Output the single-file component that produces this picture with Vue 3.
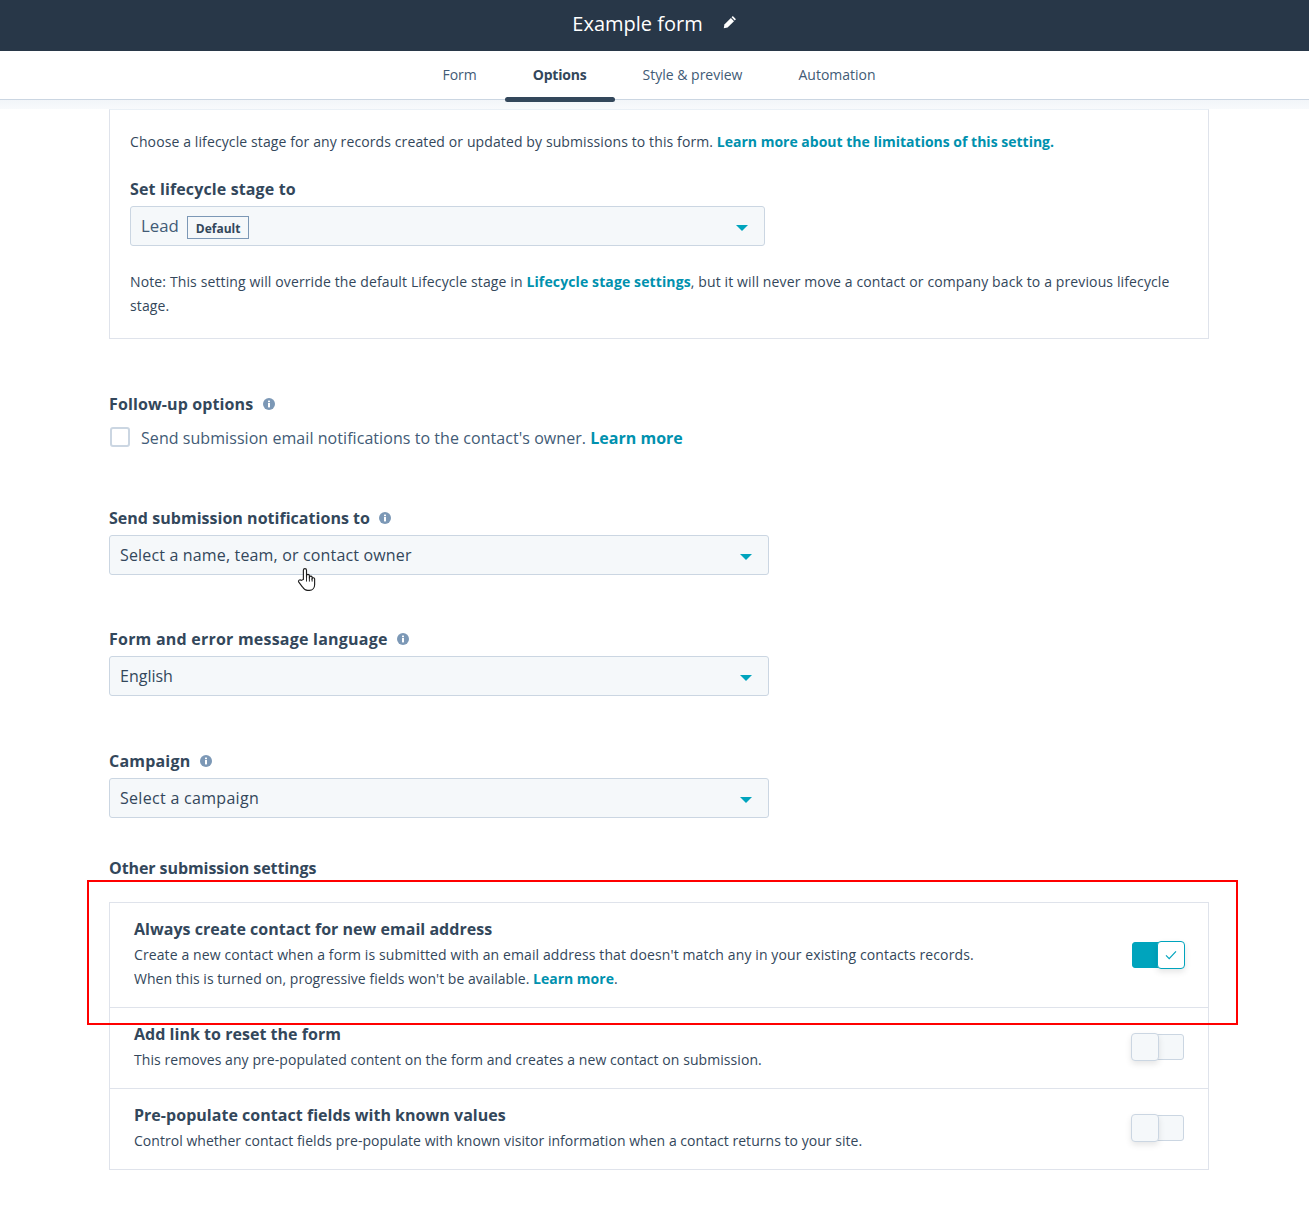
<template>
  <div class="page">
    <header class="title-bar">
      <span class="title">Example form</span>
      <svg class="pencil" viewBox="0 0 16 16" width="14" height="14">
        <path d="M11.2 1.2 14.8 4.8 13.4 6.2 9.8 2.600Z" fill="#fff" />
        <path d="M9 3.400 12.600 7 5.200 14.400 0.900 15.100 1.600 10.800Z" fill="#fff" />
      </svg>
    </header>
    <nav class="tabs">
      <a v-for="tab in tabs" :key="tab" class="tab" :class="{ active: tab === 'Options' }">{{ tab }}</a>
    </nav>
    <div class="tabs-shadow"></div>

    <main class="content">
      <section class="card">
        <p class="intro">
          Choose a lifecycle stage for any records created or updated by submissions to this form.
          <a class="link">Learn more about the limitations of this setting.</a>
        </p>
        <h3 class="label stage-label">Set lifecycle stage to</h3>
        <div class="select stage-select">
          <span class="lead">Lead</span>
          <span class="tag">Default</span>
          <span class="caret"></span>
        </div>
        <p class="note">
          Note: This setting will override the default Lifecycle stage in
          <a class="link">Lifecycle stage settings</a>, but it will never move a contact or company back to a previous lifecycle stage.
        </p>
      </section>

      <section class="followup">
        <h3 class="label follow-label">
          Follow-up options
          <svg class="info" viewBox="0 0 12 12" width="12" height="12">
            <circle cx="6" cy="6" r="6" fill="#7c98b6" />
            <rect x="5" y="5" width="2" height="4.400" fill="#fff" />
            <rect x="5" y="2.600" width="2" height="1.600" fill="#fff" />
          </svg>
        </h3>
        <div class="check-row">
          <span class="checkbox"></span>
          <span class="check-text">Send submission email notifications to the contact's owner. <a class="link">Learn more</a></span>
        </div>
      </section>

      <section v-for="f in fields" :key="f.label" class="field" :style="{ marginTop: f.gap + 'px' }">
        <h3 class="label" :style="{ letterSpacing: f.spacing + 'px' }">
          {{ f.label }}
          <svg class="info" viewBox="0 0 12 12" width="12" height="12">
            <circle cx="6" cy="6" r="6" fill="#7c98b6" />
            <rect x="5" y="5" width="2" height="4.400" fill="#fff" />
            <rect x="5" y="2.600" width="2" height="1.600" fill="#fff" />
          </svg>
        </h3>
        <div class="select wide">
          <span :style="{ letterSpacing: f.valueSpacing + 'px' }">{{ f.value }}</span>
          <span class="caret"></span>
        </div>
      </section>

      <h3 class="label other">Other submission settings</h3>
      <section class="settings">
        <div v-for="s in settings" :key="s.title" class="setting" :class="{ first: s.on }">
          <div class="setting-text">
            <h4>{{ s.title }}</h4>
            <p :style="{ letterSpacing: s.spacing + 'px' }">{{ s.text }}</p>
            <p v-if="s.on" class="extra">When this is turned on, progressive fields won't be available. <a class="link">Learn more</a>.</p>
          </div>
          <div class="toggle" :class="{ on: s.on }">
            <span class="knob">
              <svg v-if="s.on" viewBox="0 0 12 10" width="12" height="10">
                <path d="M1 5.400 4.200 8.600 11 1.400" fill="none" stroke="#00a4bd" stroke-width="1.200" />
              </svg>
            </span>
          </div>
        </div>
      </section>
    </main>

    <div class="highlight"></div>
    <svg class="cursor" viewBox="0 0 18 24" width="19" height="25">
      <path d="M6 12V3a1.500 1.500 0 0 1 3 0v7-1.500a1.400 1.400 0 0 1 2.800 0V11 9.600a1.400 1.400 0 0 1 2.600 0V11a1.300 1.300 0 0 1 2.400.4V17c0 3-2 5.500-5 5.500H10c-2.500 0-3.500-1.200-5-3.500L1.600 14.500c-1-1.500 1-3 2.400-1.600Z" fill="#fff" stroke="#1c1c1c" stroke-width="1.100" />
      <path d="M9 9v5M11.800 10v4M14.400 11v3" stroke="#1c1c1c" stroke-width="0.900" fill="none" />
    </svg>
  </div>
</template>

<script setup>
const tabs = ['Form', 'Options', 'Style & preview', 'Automation']

const fields = [
  { label: 'Send submission notifications to', value: 'Select a name, team, or contact owner', gap: 59, spacing: 0.03, valueSpacing: 0.16 },
  { label: 'Form and error message language', value: 'English', gap: 54, spacing: 0.22, valueSpacing: 0 },
  { label: 'Campaign', value: 'Select a campaign', gap: 55, spacing: 0.2, valueSpacing: 0.3 }
]

const settings = [
  {
    title: 'Always create contact for new email address',
    text: "Create a new contact when a form is submitted with an email address that doesn't match any in your existing contacts records.",
    on: true,
    spacing: 0.11
  },
  {
    title: 'Add link to reset the form',
    text: 'This removes any pre-populated content on the form and creates a new contact on submission.',
    on: false,
    spacing: 0.065
  },
  {
    title: 'Pre-populate contact fields with known values',
    text: 'Control whether contact fields pre-populate with known visitor information when a contact returns to your site.',
    on: false,
    spacing: 0.035
  }
]
</script>

<style>
html, body { margin: 0; background: #fff; }
</style>

<style scoped>
.page {
  position: relative;
  width: 1309px;
  height: 1205px;
  overflow: hidden;
  background: #fff;
  color: #33475b;
  font-family: "Open Sans", "Liberation Sans", sans-serif;
  font-size: 14px;
}
.title-bar {
  height: 51px;
  background: #283748;
  color: #fff;
  display: flex;
  justify-content: center;
  align-items: center;
  gap: 20px;
  padding-bottom: 5px;
  box-sizing: border-box;
}
.title { font-size: 20px; }
.pencil { margin-bottom: 3px; }
.tabs {
  height: 49px;
  box-sizing: border-box;
  border-bottom: 1px solid #cbd6e2;
  display: flex;
  justify-content: center;
  padding-left: 9px;
}
.tab {
  position: relative;
  padding: 0 28px;
  line-height: 48px;
  color: #425b76;
  font-size: 14px;
}
.tab.active { color: #33475b; font-weight: 700; letter-spacing: -0.2px; }
.tab.active::after {
  content: "";
  position: absolute;
  left: 0;
  right: 0;
  bottom: -3px;
  height: 5px;
  border-radius: 3px;
  background: #33475b;
}
.tabs-shadow {
  height: 9px;
  background: linear-gradient(#f2f5f9, #f8fafc);
}
.content { width: 1100px; margin-left: 109px; }
.card {
  box-sizing: border-box;
  height: 230px;
  border: 1px solid #dfe3eb;
  border-top-color: #eaf0f6;
  padding: 20px 20px 0;
}
.intro, .note { margin: 0; line-height: 24px; letter-spacing: 0.11px; }
.link { color: #0091ae; font-weight: 700; letter-spacing: 0; }
.note { letter-spacing: 0.125px; }
.note .link { letter-spacing: 0.12px; }
.label {
  margin: 0;
  font-size: 16px;
  font-weight: 700;
  line-height: 20px;
  color: #33475b;
}
.stage-label { margin-top: 25px; letter-spacing: 0.13px; }
.follow-label { letter-spacing: 0.12px; }
.select {
  box-sizing: border-box;
  height: 40px;
  display: flex;
  align-items: center;
  position: relative;
  background: #f5f8fa;
  border: 1px solid #cbd6e2;
  border-radius: 3px;
  padding: 0 10px;
  font-size: 16px;
  color: #33475b;
}
.stage-select { width: 635px; margin-top: 7px; }
.wide { width: 660px; margin-top: 7px; }
.lead { color: #425b76; font-size: 16.800px; margin-top: -1px; }
.tag {
  margin-left: 8px;
  margin-top: 3px;
  border: 1px solid #7c98b6;
  padding: 0 8px;
  height: 23px;
  line-height: 23px;
  box-sizing: border-box;
  font-size: 12px;
  font-weight: 700;
}
.caret {
  position: absolute;
  right: 16px;
  top: 18px;
  width: 0;
  height: 0;
  border-left: 6px solid transparent;
  border-right: 6px solid transparent;
  border-top: 6px solid #00a4bd;
}
.note { margin-top: 24px; }
.followup { margin-top: 55px; }
.info { margin-left: 5px; vertical-align: 0; }
.check-row {
  display: flex;
  align-items: center;
  gap: 11px;
  margin-top: 13px;
  font-size: 16px;
  color: #425b76;
  margin-left: 1px;
}
.check-text { letter-spacing: 0.06px; }
.checkbox {
  box-sizing: border-box;
  width: 20px;
  height: 20px;
  margin-bottom: 2px;
  background: #fff;
  border: 2px solid #cbd6e2;
  border-radius: 3px;
}
.other { margin-top: 40px; letter-spacing: -0.08px; }
.settings {
  margin-top: 24px;
  border: 1px solid #dfe3eb;
}
.setting {
  height: 81px;
  box-sizing: border-box;
  padding: 16px 24px 0;
  display: flex;
  justify-content: space-between;
  border-top: 1px solid #dfe3eb;
}
.setting:first-child { border-top: 0; }
.setting.first { height: 104px; }
h4 {
  margin: 0;
  font-size: 16px;
  line-height: 20px;
  font-weight: 700;
  color: #33475b;
  letter-spacing: 0.03px;
}
.setting-text p { margin: 3px 0 0; line-height: 21px; color: #33475b; }
.setting-text h4 + p { margin-top: 5px; }
.setting-text .extra { letter-spacing: 0.03px; }
.toggle {
  position: relative;
  box-sizing: border-box;
  width: 52px;
  height: 26px;
  margin: 10px 0 0;
  background: #f5f8fa;
  border: 1px solid #cbd6e2;
  border-radius: 3px;
}
.knob {
  position: absolute;
  left: -2px;
  top: -2px;
  box-sizing: border-box;
  width: 28px;
  height: 28px;
  background: #f5f8fa;
  border: 1px solid #cbd6e2;
  border-radius: 4px;
  box-shadow: 0 3px 6px rgba(0, 0, 0, 0.1);
  display: flex;
  align-items: center;
  justify-content: center;
}
.toggle.on {
  background: #00a4bd;
  border-color: #00a4bd;
  margin-top: 23px;
}
.toggle.on .knob {
  left: auto;
  right: -2px;
  background: #fff;
  border-color: #00a4bd;
}
.highlight {
  position: absolute;
  left: 87px;
  top: 880px;
  width: 1151px;
  height: 145px;
  box-sizing: border-box;
  border: 2px solid #f00;
  pointer-events: none;
}
.cursor { position: absolute; left: 297px; top: 567px; }
</style>
